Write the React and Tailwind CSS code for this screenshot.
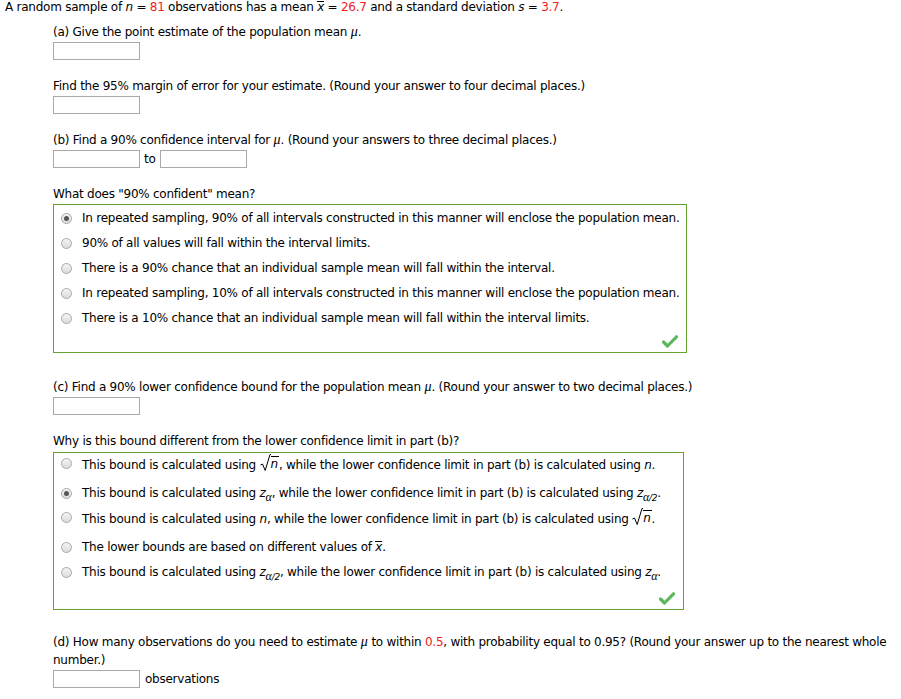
import React from "react";

const Red = ({ children }) => <span className="text-[#ee1c1c]">{children}</span>;

const Var = ({ children }) => <i className="italic">{children}</i>;

const Mu = () => (
  <i className="italic font-['Liberation_Serif',serif] text-[14px] leading-none tracking-normal">μ</i>
);

const XBar = () => (
  <span className="inline-block border-t border-black leading-[11px] italic">x</span>
);

const Sqrt = ({ children }) => (
  <span className="inline-flex items-end align-[-3px] leading-none">
    <svg width="11" height="18" viewBox="0 0 11 18" className="block">
      <path d="M0.5 11 L2.5 10 L5.2 16.5 L10 0.5 L11 0.5" fill="none" stroke="#000" strokeWidth="1" />
    </svg>
    <span className="border-t border-black leading-[15px] italic pr-[1px]">{children}</span>
  </span>
);

const Z = ({ sub }) => (
  <span className="relative">
    <i className="italic">z</i>
    <span className="relative top-[4px] text-[9px] italic leading-none">
      <span className="font-['Liberation_Serif',serif] text-[12px]">α</span>
      {sub ? "/2" : ""}
    </span>
  </span>
);

const Input = () => (
  <span className="inline-block w-[87px] h-[18px] border border-[#a9a9a9] bg-white align-middle" />
);

const Radio = ({ checked }) => (
  <span className="inline-flex w-[11px] h-[11px] rounded-full border border-[#a8a8a8] bg-gradient-to-b from-[#f4f4f4] to-[#dcdcdc] items-center justify-center shrink-0">
    {checked && <span className="w-[5px] h-[5px] rounded-full bg-[#555]" />}
  </span>
);

const Check = () => (
  <svg width="16" height="13" viewBox="0 0 16 13" className="block">
    <path d="M1.5 7 L5.5 11 L14.5 1.8" fill="none" stroke="#5cb85c" strokeWidth="3.2" strokeLinecap="round" strokeLinejoin="round" />
  </svg>
);

const Choices = ({ items, width, rowMt, checkMt }) => (
  <div className={`border border-[#67a234] pt-[1px] pb-[1px] ${width}`}>
    {items.map((it, i) => (
      <div key={i} className={`flex items-center pl-[7px] h-[25px] ${rowMt[i]}`}>
        <Radio checked={it.checked} />
        <span className="ml-[10px] whitespace-nowrap">{it.text}</span>
      </div>
    ))}
    <div className={`flex justify-end pr-[8px] h-[20px] items-center ${checkMt}`}>
      <Check />
    </div>
  </div>
);

export default function App() {
  const meaning = [
    { checked: true, text: "In repeated sampling, 90% of all intervals constructed in this manner will enclose the population mean." },
    { text: "90% of all values will fall within the interval limits." },
    { text: "There is a 90% chance that an individual sample mean will fall within the interval." },
    { text: "In repeated sampling, 10% of all intervals constructed in this manner will enclose the population mean." },
    { text: "There is a 10% chance that an individual sample mean will fall within the interval limits." },
  ];

  const bounds = [
    { text: <>This bound is calculated using <Sqrt>n</Sqrt>, while the lower confidence limit in part (b) is calculated using <Var>n</Var>.</> },
    { checked: true, text: <>This bound is calculated using <Z />, while the lower confidence limit in part (b) is calculated using <Z sub />.</> },
    { text: <>This bound is calculated using <Var>n</Var>, while the lower confidence limit in part (b) is calculated using <Sqrt>n</Sqrt>.</> },
    { text: <>The lower bounds are based on different values of <XBar />.</> },
    { text: <>This bound is calculated using <Z sub />, while the lower confidence limit in part (b) is calculated using <Z />.</> },
  ];

  return (
    <div className="w-[901px] h-[699px] bg-white text-black font-['DejaVu_Sans',sans-serif] text-[12px] leading-[15px] tracking-[-0.25px] overflow-hidden">
      <p className="pl-[5px]">
        A random sample of <Var>n</Var> = <Red>81</Red> observations has a mean <XBar /> = <Red>26.7</Red> and a standard deviation <Var>s</Var> = <Red>3.7</Red>.
      </p>

      <div className="ml-[53px]">
        <p className="mt-[10px]">(a) Give the point estimate of the population mean <Mu />.</p>
        <div className="mt-[2px] h-[18px] flex"><Input /></div>

        <p className="mt-[19px]">Find the 95% margin of error for your estimate. (Round your answer to four decimal places.)</p>
        <div className="mt-[2px] h-[18px] flex"><Input /></div>

        <p className="mt-[19px]">(b) Find a 90% confidence interval for <Mu />. (Round your answers to three decimal places.)</p>
        <div className="mt-[2px] h-[18px] flex items-center">
          <Input />
          <span className="ml-[4px] mr-[4px]">to</span>
          <Input />
        </div>

        <p className="mt-[19px]">What does "90% confident" mean?</p>
        <div className="mt-[2px]">
          <Choices
            items={meaning}
            width="w-[634px]"
            rowMt={["", "", "", "", ""]}
            checkMt=""
          />
        </div>

        <p className="mt-[27px]">(c) Find a 90% lower confidence bound for the population mean <Mu />. (Round your answer to two decimal places.)</p>
        <div className="mt-[2px] h-[18px] flex"><Input /></div>

        <p className="mt-[19px]">Why is this bound different from the lower confidence limit in part (b)?</p>
        <div className="mt-[3px]">
          <Choices
            items={bounds}
            width="w-[631px]"
            rowMt={["-mt-[3px]", "mt-[5px]", "-mt-[1px]", "mt-[5px]", ""]}
            checkMt="mt-[3px]"
          />
        </div>

        <p className="mt-[23px] leading-[18px]">
          (d) How many observations do you need to estimate <Mu /> to within <Red>0.5</Red>, with probability equal to 0.95? (Round your answer up to the nearest whole number.)
        </p>
        <div className="mt-[1px] h-[18px] flex items-center">
          <Input />
          <span className="ml-[5px]">observations</span>
        </div>
      </div>
    </div>
  );
}
